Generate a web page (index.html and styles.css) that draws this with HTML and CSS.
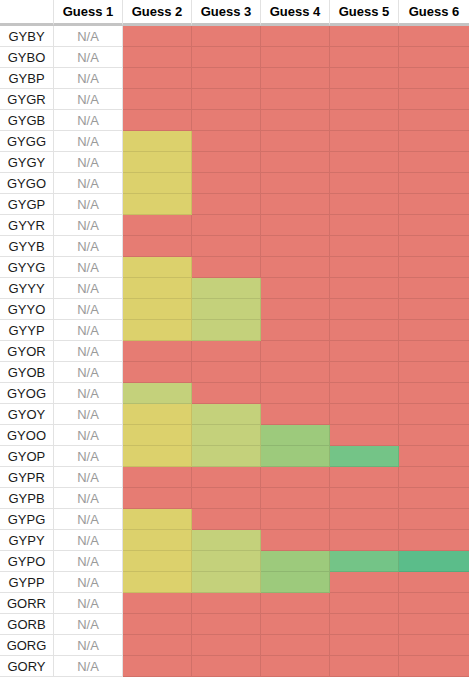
FILE: index.html
```html
<!DOCTYPE html>
<html lang="en">
<head>
  <meta charset="UTF-8">
  <meta name="viewport" content="width=device-width, initial-scale=1.0">
  <title>Guesses</title>
  <link rel="stylesheet" href="styles.css">
</head>
<body>
  <table class="sheet">
    <colgroup>
      <col class="c-label">
      <col class="c-guess">
      <col class="c-guess">
      <col class="c-guess">
      <col class="c-guess">
      <col class="c-guess">
      <col class="c-last">
    </colgroup>
    <thead>
      <tr>
        <th></th>
        <th>Guess 1</th>
        <th>Guess 2</th>
        <th>Guess 3</th>
        <th>Guess 4</th>
        <th>Guess 5</th>
        <th>Guess 6</th>
      </tr>
    </thead>
    <tbody id="rows"></tbody>
  </table>

  <script>
    // r = red, y = yellow, l = light green, m = mid green, g = green, d = dark green
    const rows = [
      ['GYBY', 'rrrrr'], ['GYBO', 'rrrrr'], ['GYBP', 'rrrrr'], ['GYGR', 'rrrrr'],
      ['GYGB', 'rrrrr'], ['GYGG', 'yrrrr'], ['GYGY', 'yrrrr'], ['GYGO', 'yrrrr'],
      ['GYGP', 'yrrrr'], ['GYYR', 'rrrrr'], ['GYYB', 'rrrrr'], ['GYYG', 'yrrrr'],
      ['GYYY', 'ylrrr'], ['GYYO', 'ylrrr'], ['GYYP', 'ylrrr'], ['GYOR', 'rrrrr'],
      ['GYOB', 'rrrrr'], ['GYOG', 'lrrrr'], ['GYOY', 'ylrrr'], ['GYOO', 'ylmrr'],
      ['GYOP', 'ylmgr'], ['GYPR', 'rrrrr'], ['GYPB', 'rrrrr'], ['GYPG', 'yrrrr'],
      ['GYPY', 'ylrrr'], ['GYPO', 'ylmgd'], ['GYPP', 'ylmrr'], ['GORR', 'rrrrr'],
      ['GORB', 'rrrrr'], ['GORG', 'rrrrr'], ['GORY', 'rrrrr']
    ];

    const body = document.getElementById('rows');
    rows.forEach(([label, cells]) => {
      const tr = document.createElement('tr');
      tr.innerHTML = `<td class="label">${label}</td><td class="na">N/A</td>` +
        cells.split('').map(c => `<td class="s-${c}"></td>`).join('');
      body.appendChild(tr);
    });
  </script>
</body>
</html>
```

FILE: styles.css
```css
body {
  margin: 0;
  background: #fff;
  font-family: "Liberation Sans", Arial, sans-serif;
  font-size: 13px;
  color: #000;
}
.sheet {
  border-collapse: separate;
  border-spacing: 0;
  table-layout: fixed;
  width: 469px;
}
.c-label { width: 54px; }
.c-guess { width: 69px; }
.c-last { width: 70px; }
.sheet th,
.sheet td {
  padding: 0;
  border-right: 1px solid #e2e2e2;
  border-bottom: 1px solid #e2e2e2;
  text-align: center;
  white-space: nowrap;
  overflow: hidden;
}
.sheet th {
  height: 23px;
  font-weight: bold;
  border-bottom: 3px solid #c4c4c4;
}
.sheet td {
  height: 20px;
}
.sheet th:last-child,
.sheet td:last-child {
  border-right: none;
}
.label { color: #1a1a1a; }
.na { color: #9a9a9a; }

.s-r, .s-y, .s-l, .s-m, .s-g, .s-d {
  border-color: rgba(0,0,0,0.09);
}
.sheet td.s-r, .sheet td.s-y, .sheet td.s-l,
.sheet td.s-m, .sheet td.s-g, .sheet td.s-d {
  border-right-color: rgba(0,0,0,0.09);
  border-bottom-color: rgba(0,0,0,0.09);
}
.s-r { background: #e67c73; }
.s-y { background: #dcd16c; }
.s-l { background: #c4d17b; }
.s-m { background: #9dca7c; }
.s-g { background: #74c487; }
.s-d { background: #5bbd8a; }
```
